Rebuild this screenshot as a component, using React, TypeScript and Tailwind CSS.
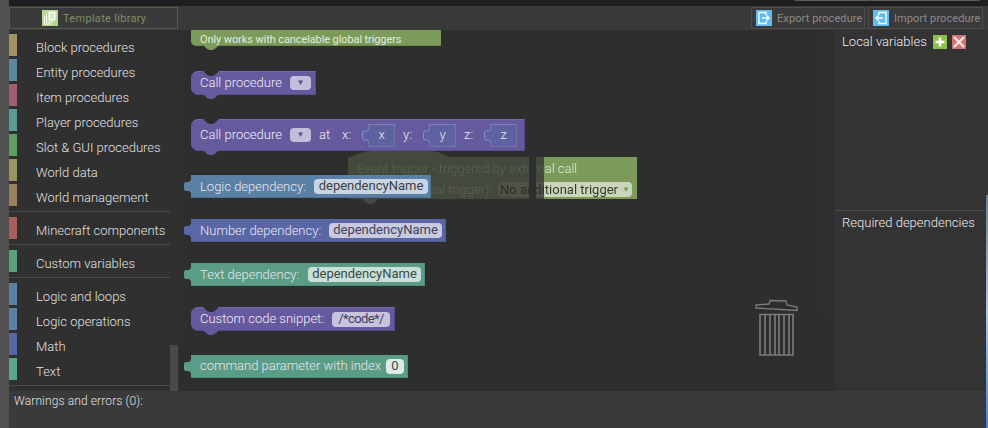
import React from 'react';

const categories = [
  [
    ['Block procedures', 'bg-[#a0935f]'],
    ['Entity procedures', 'bg-[#5b87a1]'],
    ['Item procedures', 'bg-[#a05c70]'],
    ['Player procedures', 'bg-[#5b9a97]'],
    ['Slot & GUI procedures', 'bg-[#639c62]'],
    ['World data', 'bg-[#9a9563]'],
    ['World management', 'bg-[#99835f]'],
  ],
  [['Minecraft components', 'bg-[#a5605f]']],
  [['Custom variables', 'bg-[#5ba07f]']],
  [
    ['Logic and loops', 'bg-[#5b80a5]'],
    ['Logic operations', 'bg-[#5b80a5]'],
    ['Math', 'bg-[#5b67a5]'],
    ['Text', 'bg-[#5ba58c]'],
  ],
];

const Notch = ({ className }: { className: string }) => (
  <svg className={className} width="16" height="5" viewBox="0 0 16 5">
    <path d="M0 0 L3 3 Q5 5 7 5 H9 Q11 5 13 3 L16 0 Z" fill="currentColor" />
  </svg>
);

const Tab = ({ className }: { className: string }) => (
  <svg className={className} width="7" height="13" viewBox="0 0 7 13">
    <path d="M7 0 L5 2 H2 Q0 2 0 4 V9 Q0 11 2 11 H5 L7 13 Z" fill="currentColor" />
  </svg>
);

const Field = ({ className, children }: { className: string; children: React.ReactNode }) => (
  <span className={`flex h-[15px] items-center justify-center rounded-[4px] text-[13px] font-normal ${className}`}>
    {children}
  </span>
);

const Dropdown = () => (
  <span className="flex h-[14px] w-[21px] items-center justify-center rounded-[4px] bg-[#c3bddb]">
    <span className="text-[8px] leading-none text-[#5a4f8e]">▼</span>
  </span>
);

const Socket = ({ label }: { label: string }) => (
  <span className="relative ml-[6px] flex h-[23px] w-[27px] items-center justify-center border border-[#7175ac] border-t-[#7e82b6] bg-[#5e62a0] text-[13px] text-[#eceaf5]">
    <svg className="absolute -left-[7px] top-[3px]" width="7" height="15" viewBox="0 0 7 15">
      <path d="M7 1 L5 3 H2.5 Q0.5 3 0.5 5 V10 Q0.5 12 2.5 12 H5 L7 14" fill="#5e62a0" stroke="#8a8ec0" />
    </svg>
    {label}
  </span>
);

const Output = ({
  className,
  tab,
  children,
}: {
  className: string;
  tab: string;
  children: React.ReactNode;
}) => (
  <div className={`relative flex h-[23px] items-center border-b border-r pl-[9px] text-[13px] text-[#e8e8ee] ${className}`}>
    <Tab className={`absolute -left-[7px] top-[5px] ${tab}`} />
    {children}
  </div>
);

// dragged block: one box, its left side faded and its right side in full colour
const Ghost = () => (
  <div className="absolute left-[170px] top-[120px] h-[49px] w-[289px] font-light">
    <svg className="absolute left-0 top-0" width="104" height="8" viewBox="0 0 104 8">
      <path d="M0 8 Q8 4 20 1 Q28 0 40 0 H70 Q82 0 90 2 Q98 5 104 8 Z" fill="#43493c" />
    </svg>
    <div className="absolute bottom-0 left-0 right-0 top-[7px] rounded-bl-[4px] bg-[linear-gradient(90deg,#43493c_181px,#2e2e2e_181px,#2e2e2e_188px,#43493c_188px,#43493c_196px,#7c9b5b_196px)]" />
    <svg className="absolute -bottom-[5px] left-[14px] text-[#43493c]" width="16" height="5" viewBox="0 0 16 5">
      <path d="M0 0 L3 3 Q5 5 7 5 H9 Q11 5 13 3 L16 0 Z" fill="currentColor" />
    </svg>
    <div className="relative flex h-full flex-col whitespace-nowrap pl-[9px] pr-[5px] pt-[11px] text-[13px]">
      <span className="self-start bg-[linear-gradient(90deg,#5c6353_172px,transparent_172px,transparent_179px,#5c6353_179px,#5c6353_187px,#f0f3ea_187px)] bg-clip-text leading-[16px] text-transparent">
        Event trigger - triggered by external call
      </span>
      <div className="mt-[3px] flex items-center justify-end">
        <span className="mr-[6px] text-[#5c6353]">(global trigger):</span>
        <span className="flex h-[15px] w-[134px] items-center rounded-[4px] bg-[linear-gradient(90deg,#4f5347_31px,#2e2e2e_31px,#2e2e2e_38px,#4f5347_38px,#4f5347_46px,#c9d6b9_46px)] pl-[2px] font-normal">
          <span className="bg-[linear-gradient(90deg,#2b2d28_29px,transparent_29px,transparent_36px,#2b2d28_36px,#2b2d28_44px,#33382c_44px)] bg-clip-text text-transparent">
            No additional trigger
          </span>
          <span className="ml-[4px] text-[8px] text-[#7c9b5b]">▼</span>
        </span>
      </div>
    </div>
  </div>
);

const ExportIcon = () => (
  <svg width="16" height="16" viewBox="0 0 16 16" className="shrink-0">
    <rect width="16" height="16" fill="#5fbdf2" />
    <path d="M10 5 V2.5 H3 V13.5 H10 V11" fill="none" stroke="#fff" strokeWidth="1.3" />
    <path d="M6 8 H13 M10.5 5.5 L13.2 8 L10.5 10.5" fill="none" stroke="#fff" strokeWidth="1.3" />
  </svg>
);

const ImportIcon = () => (
  <svg width="16" height="16" viewBox="0 0 16 16" className="shrink-0">
    <rect width="16" height="16" fill="#5fbdf2" />
    <path d="M6 5 V2.5 H13 V13.5 H6 V11" fill="none" stroke="#fff" strokeWidth="1.3" />
    <path d="M10 8 H3 M5.5 5.5 L2.8 8 L5.5 10.5" fill="none" stroke="#fff" strokeWidth="1.3" />
  </svg>
);

const TemplateIcon = () => (
  <svg width="16" height="16" viewBox="0 0 16 16" className="shrink-0">
    <rect width="16" height="16" fill="#b4d88c" />
    <path d="M2.5 5.5 V14 H9" fill="none" stroke="#fff" strokeWidth="1" />
    <path d="M4.5 3.5 V12 H11" fill="none" stroke="#fff" strokeWidth="1" />
    <path d="M6.5 1.5 H13.5 V10.5 H6.5 Z" fill="#fff" />
    <path d="M8 4 H12 M8 6 H12 M8 8 H12" stroke="#b4d88c" strokeWidth="1" />
  </svg>
);

const Trash = () => (
  <svg className="absolute left-[577px] top-[269px]" width="44" height="58" viewBox="0 0 44 58" fill="none" stroke="#7c7c7c">
    <path d="M1 6 L14 5 L15 1.5 L31 2 L32 6 L42 8 L42 11.5 L1 9 Z" strokeWidth="1.4" />
    <path
      d="M5 15.5 H38 V56 H5 Z M10 15 V56 M15 15 V56 M20 15 V56 M24 15 V56 M29 15 V56 M34 15 V56"
      strokeWidth="1.6"
    />
  </svg>
);

export default function App() {
  return (
    <div className="relative flex h-[428px] w-[988px] overflow-hidden bg-[#2e2e2e] font-[Roboto,sans-serif] font-light">
      <div className="h-full w-[9px] shrink-0 bg-[#505050]" />

      <div className="flex h-full min-w-0 flex-1 flex-col">
        <div className="flex h-[6px] shrink-0 justify-end bg-[#1e1e1e]">
          <div className="mr-[8px] h-px w-[185px] bg-[#5a5a5a]" />
        </div>

        <div className="flex h-[24px] shrink-0 items-center justify-between bg-[#3a3a3a] pr-[5px]">
          <div className="flex h-[22px] w-[169px] items-center gap-[5px] border border-[#575c48] pl-[32px] text-[11px] font-normal tracking-[0.3px] text-[#7d8f66]">
            <TemplateIcon />
            <span className="pt-[3px]">Template library</span>
          </div>
          <div className="flex gap-[3px]">
            <div className="flex h-[22px] w-[114px] items-center gap-[5px] border border-[#4c4c4c] pl-[4px] text-[11px] font-normal tracking-[0.1px] text-[#8c8c8c]">
              <ExportIcon />
              <span className="whitespace-nowrap pt-[3px]">Export procedure</span>
            </div>
            <div className="flex h-[22px] w-[115px] items-center gap-[5px] border border-[#4c4c4c] pl-[4px] text-[11px] font-normal tracking-[0.1px] text-[#8c8c8c]">
              <ImportIcon />
              <span className="whitespace-nowrap pt-[3px]">Import procedure</span>
            </div>
          </div>
        </div>

        <div className="flex min-h-0 flex-1">
          <aside className="relative w-[169px] shrink-0 bg-[#303030] pr-[8px]">
            {categories.map((group, i) => (
              <div key={i} className="flex flex-col gap-[3px] border-b border-[#4a4a4a] pb-[5px] pt-[5px] first:pt-[4px]">
                {group.map(([name, color]) => (
                  <div key={name} className="flex h-[22px] items-center">
                    <span className={`h-full w-[8px] ${color}`} />
                    <span className="ml-[19px] whitespace-nowrap pt-[5px] text-[13px] text-[#e0e0e0]">{name}</span>
                  </div>
                ))}
              </div>
            ))}
            <div className="absolute bottom-0 right-0 h-[46px] w-[8px] bg-[#4a4a4a]" />
          </aside>

          <main className="relative w-[657px] shrink-0 overflow-hidden">
            <div className="absolute right-[5px] top-0 h-[285px] w-[8px] bg-[#303030]" />
            <Trash />
            <Ghost />

            <div className="relative flex flex-col items-start pl-[13px]">
              <div className="relative flex h-[16px] w-[250px] items-center rounded-bl-[5px] border-b border-[#6c8a4e] bg-[#7c9b5b] pl-[9px] pt-[5px] text-[11px] font-normal tracking-[-0.1px] text-[#e3eada]">
                <Notch className="absolute -bottom-[5px] left-[12px] text-[#7c9b5b]" />
                Only works with cancelable global triggers
              </div>

              <div className="relative mt-[25px] flex h-[24px] w-[125px] items-center rounded-l-[7px] border-b border-r border-t border-[#574c8a] border-t-[#766aad] bg-[#665a9e] pl-[9px] text-[13px] text-[#f0edf8]">
                <Notch className="absolute -top-px left-[12px] text-[#2e2e2e]" />
                <Notch className="absolute -bottom-[5px] left-[12px] text-[#665a9e]" />
                <span>Call procedure</span>
                <span className="ml-[8px]">
                  <Dropdown />
                </span>
              </div>

              <div className="relative mt-[24px] flex h-[32px] w-[334px] items-center rounded-l-[7px] border-b border-r border-t border-[#574c8a] border-t-[#766aad] bg-[#665a9e] pl-[9px] text-[13px] text-[#f0edf8]">
                <Notch className="absolute -top-px left-[12px] text-[#2e2e2e]" />
                <Notch className="absolute -bottom-[5px] left-[12px] text-[#665a9e]" />
                <span>Call procedure</span>
                <span className="ml-[8px]">
                  <Dropdown />
                </span>
                <span className="ml-[8px]">at</span>
                <span className="ml-[12px] w-[20px]">x:</span>
                <Socket label="x" />
                <span className="ml-[8px] w-[20px]">y:</span>
                <Socket label="y" />
                <span className="ml-[8px] w-[20px]">z:</span>
                <Socket label="z" />
              </div>

              <Output className="mt-[24px] w-[240px] border-[#4e7296] bg-[#5b80a5]" tab="text-[#5b80a5]">
                <span className="w-[113px] pt-px">Logic dependency:</span>
                <Field className="ml-px w-[114px] bg-[#c9d5e2] text-[#3a3f45]">dependencyName</Field>
              </Output>

              <Output className="mt-[21px] w-[255px] border-[#4e5a96] bg-[#5b67a5]" tab="text-[#5b67a5]">
                <span className="w-[129px] pt-px">Number dependency:</span>
                <Field className="w-[113px] bg-[#c8cbe0] text-[#3f4258]">dependencyName</Field>
              </Output>

              <Output className="mt-[21px] w-[234px] border-[#4e8f79] bg-[#5a9c86]" tab="text-[#5a9c86]">
                <span className="w-[108px] pt-px">Text dependency:</span>
                <Field className="w-[113px] bg-[#c9e0d8] text-[#3a4a44]">dependencyName</Field>
              </Output>

              <div className="relative mt-[21px] flex h-[24px] w-[204px] items-center rounded-l-[7px] border-b border-r border-t border-[#574c8a] border-t-[#766aad] bg-[#665a9e] pl-[9px] text-[13px] text-[#f0edf8]">
                <Notch className="absolute -top-px left-[12px] text-[#2e2e2e]" />
                <Notch className="absolute -bottom-[5px] left-[12px] text-[#665a9e]" />
                <span className="w-[132px] pb-px">Custom code snippet:</span>
                <Field className="w-[58px] bg-[#c8c2df] tracking-[-0.6px] text-[#423d5c]">/*code*/</Field>
              </div>

              <Output className="mt-[24px] w-[217px] border-[#4e8f79] bg-[#5a9c86]" tab="text-[#5a9c86]">
                <span className="w-[186px] whitespace-nowrap">command parameter with index</span>
                <Field className="w-[18px] bg-[#dcebe5] text-[#3a4a44]">0</Field>
              </Output>
            </div>
          </main>

          <aside className="min-w-0 flex-1 bg-[#333333]">
            <div className="h-[180px] pl-[7px] pr-[3px]">
              <div className="flex h-[22px] items-center pt-[1px] text-[13px] text-[#ececec]">
                <span className="w-[91px]">Local variables</span>
                <span className="flex h-[14px] w-[14px] items-center justify-center bg-[#8bc34a]">
                  <svg width="10" height="10" viewBox="0 0 10 10">
                    <path d="M5 0.5 V9.5 M0.5 5 H9.5" stroke="#fff" strokeWidth="2.6" />
                  </svg>
                </span>
                <span className="ml-[5px] flex h-[14px] w-[14px] items-center justify-center bg-[#d27474]">
                  <svg width="12" height="12" viewBox="0 0 12 12">
                    <path d="M1 1 L11 11 M11 1 L1 11" stroke="#f6e4e4" strokeWidth="2.4" />
                  </svg>
                </span>
              </div>
            </div>
            <div className="mr-[3px] border-t border-[#4c4c4c] pl-[7px] pt-[3px] text-[13px] leading-[17px] text-[#ececec]">
              Required dependencies
            </div>
          </aside>
        </div>

        <div className="h-[37px] shrink-0 bg-[#3a3a3a] pl-[5px] pt-[1px] text-[12px] leading-[18px] tracking-[0.12px] text-[#e0e0e0]">
          Warnings and errors (0):
        </div>
      </div>

      <div className="absolute bottom-0 right-0 h-[233px] w-[2px] bg-linear-to-b from-[#6f7f8c] via-[#a9c4e4] to-[#3f86d8]" />
    </div>
  );
}
